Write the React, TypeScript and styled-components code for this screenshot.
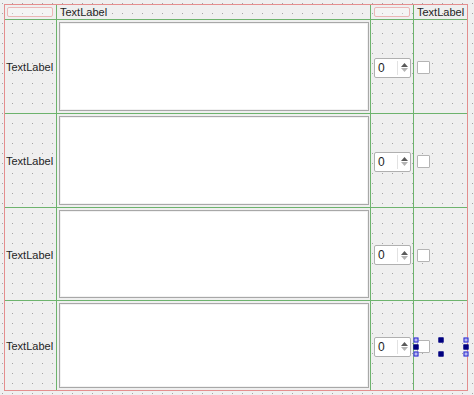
import React from "react";
import styled, { createGlobalStyle } from "styled-components";

const GlobalStyle = createGlobalStyle`
  html, body { margin: 0; padding: 0; background: #efefef; }
  body { font-family: "Liberation Sans", Arial, sans-serif; }
`;

const Canvas = styled.div`
  width: 474px;
  height: 395px;
  box-sizing: border-box;
  padding: 4px 0 0 4px;
  background-color: #efefef;
  background-image: radial-gradient(circle at 0.5px 0.5px, #a4a4a4 0.6px, transparent 0.9px);
  background-size: 10px 10px;
  background-position: 2px 3px;
  overflow: hidden;
`;

const LayoutBox = styled.div`
  width: 464px;
  height: 387px;
  box-sizing: border-box;
  border: 1px solid #e48e8e;
  display: grid;
  grid-template-columns: 52px 314px 43px 53px;
  grid-template-rows: 15px 94px 94px 93px 89px;
`;

const Cell = styled.div<{ $right?: boolean; $bottom?: boolean; $pad?: string }>`
  box-sizing: border-box;
  display: flex;
  align-items: center;
  min-width: 0;
  padding: ${(p) => p.$pad || "0"};
  border-right: ${(p) => (p.$right ? "1px solid #6db36d" : "none")};
  border-bottom: ${(p) => (p.$bottom ? "1px solid #6db36d" : "none")};
`;

const Label = styled.span`
  font-size: 11px;
  color: #1e1e1e;
  white-space: nowrap;
  line-height: 13px;
`;

const Spacer = styled.div<{ $w: number }>`
  width: ${(p) => p.$w}px;
  height: 10px;
  box-sizing: border-box;
  border: 1px solid #ebb6b6;
  border-radius: 2px;
  background: rgba(255, 255, 255, 0.3);
`;

const TextEdit = styled.div`
  width: 100%;
  height: 100%;
  box-sizing: border-box;
  background: #ffffff;
  border: 1px solid #a8a8a8;
  box-shadow: inset 0 0 0 1px #f2f2f2;
`;

const SpinBox = styled.div`
  width: 37px;
  height: 20px;
  box-sizing: border-box;
  display: flex;
  background: #ffffff;
  border: 1px solid #b0b0b0;
  border-radius: 2px;
  margin-top: 2px;
`;

const SpinValue = styled.span`
  flex: 1;
  font-size: 12px;
  line-height: 18px;
  padding-left: 3px;
  color: #1e1e1e;
`;

const SpinButtons = styled.div`
  width: 13px;
  box-sizing: border-box;
  border-left: 1px solid #e2e2e2;
  margin: 2px 0;
  display: flex;
  flex-direction: column;
  align-items: center;
  justify-content: center;
  gap: 1px;
`;

const CheckWrap = styled.div`
  position: relative;
  width: 50px;
  height: 14px;
  margin-left: 2px;
  margin-top: 2px;
  display: flex;
  align-items: center;
`;

const Indicator = styled.div`
  width: 13px;
  height: 13px;
  margin-left: 1px;
  box-sizing: border-box;
  background: #ffffff;
  border: 1px solid #b4b4b4;
  border-radius: 1px;
`;

const Handle = styled.div<{ $solid?: boolean; $x: string; $y: string }>`
  position: absolute;
  width: 5px;
  height: 5px;
  box-sizing: border-box;
  left: ${(p) => p.$x};
  top: ${(p) => p.$y};
  transform: translate(-50%, -50%);
  background: ${(p) => (p.$solid ? "#000080" : "#b8b8f0")};
  border: 1px solid ${(p) => (p.$solid ? "#000080" : "#2b2bd0")};
`;

const Arrow = ({ up, color }: { up?: boolean; color: string }) => (
  <svg width="7" height="4" viewBox="0 0 7 4">
    <path d={up ? "M0 4 L3.5 0 L7 4 Z" : "M0 0 L3.5 4 L7 0 Z"} fill={color} />
  </svg>
);

const Spin = () => (
  <SpinBox>
    <SpinValue>0</SpinValue>
    <SpinButtons>
      <Arrow up color="#5a5a5a" />
      <Arrow color="#b4b4b4" />
    </SpinButtons>
  </SpinBox>
);

const handles: Array<[string, string, boolean]> = [
  ["0px", "0px", false],
  ["0px", "50%", true],
  ["0px", "100%", false],
  ["50%", "0px", true],
  ["50%", "100%", true],
  ["100%", "0px", false],
  ["100%", "50%", true],
  ["100%", "100%", false],
];

const Row = ({ last, selected }: { last?: boolean; selected?: boolean }) => (
  <>
    <Cell $right $bottom={!last} $pad="2px 0 0 1px">
      <Label>TextLabel</Label>
    </Cell>
    <Cell $right $bottom={!last} $pad="2px 1px 2px 2px">
      <TextEdit />
    </Cell>
    <Cell $right $bottom={!last} $pad="0 0 0 3px">
      <Spin />
    </Cell>
    <Cell $bottom={!last}>
      <CheckWrap>
        <Indicator />
        {selected &&
          handles.map(([x, y, s], i) => <Handle key={i} $x={x} $y={y} $solid={s} />)}
      </CheckWrap>
    </Cell>
  </>
);

export default function App() {
  return (
    <>
      <GlobalStyle />
      <Canvas>
        <LayoutBox>
          <Cell $right $bottom $pad="0 0 0 2px">
            <Spacer $w={46} />
          </Cell>
          <Cell $right $bottom $pad="0 0 0 3px">
            <Label>TextLabel</Label>
          </Cell>
          <Cell $right $bottom $pad="0 0 0 3px">
            <Spacer $w={36} />
          </Cell>
          <Cell $bottom $pad="0 0 0 3px">
            <Label>TextLabel</Label>
          </Cell>
          <Row />
          <Row />
          <Row />
          <Row last selected />
        </LayoutBox>
      </Canvas>
    </>
  );
}
